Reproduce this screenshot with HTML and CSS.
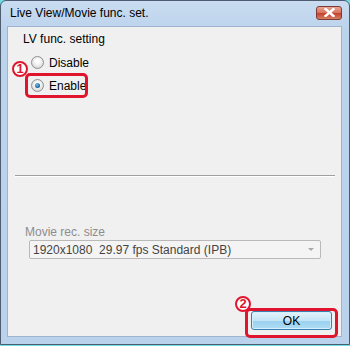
FILE: index.html
```html
<!DOCTYPE html>
<html>
<head>
<meta charset="utf-8">
<link rel="stylesheet" href="styles.css">
</head>
<body>
<div class="window">
  <div class="titlebar">
    <span class="title">Live View/Movie func. set.</span>
    <span class="close">
      <svg width="11" height="9" viewBox="0 0 11 9"><path d="M1.5 1 L9.5 8 M9.5 1 L1.5 8" stroke="#fff" stroke-width="2.4" stroke-linecap="square"/></svg>
    </span>
  </div>
  <div class="client">
    <div class="group-title">LV func. setting</div>
    <div class="radios">
      <div class="radio-row"><span class="radio"></span><span>Disable</span></div>
      <div class="radio-row"><span class="radio checked"></span><span>Enable</span></div>
    </div>
    <div class="separator"></div>
    <div class="field-label">Movie rec. size</div>
    <div class="select">
      <span>1920x1080&nbsp; 29.97 fps Standard (IPB)</span>
      <span class="arrow"></span>
    </div>
    <div class="footer">
      <button class="ok">OK</button>
    </div>
  </div>
  <div class="mark box1"></div>
  <div class="mark num n1">1</div>
  <div class="mark box2"></div>
  <div class="mark num n2">2</div>
</div>
</body>
</html>
```
FILE: styles.css
```css
html, body { margin: 0; padding: 0; }
body {
  width: 350px; height: 346px; overflow: hidden;
  background: #6fdfe6;
  font-family: "Liberation Sans", Arial, sans-serif;
  font-size: 12px; color: #000;
}
.window {
  position: relative;
  box-sizing: border-box;
  width: 350px; height: 345px;
  border: 1px solid #4d5c6e;
  border-radius: 6px 6px 0 0;
  background: linear-gradient(#c9dcf1, #bcd3ec 30px, #bad2ec);
  display: flex; flex-direction: column;
}
.titlebar {
  height: 25px;
  display: flex; align-items: center;
  padding: 0 7px 0 9px;
}
.title { flex: 1; font-size: 12px; margin-top: -1px; }
.close {
  width: 26px; height: 14px;
  box-sizing: border-box;
  border: 1px solid #7d3a36;
  border-radius: 3px;
  background: linear-gradient(#e9a593, #d7705c 50%, #c2402c 51%, #d67e63);
  display: flex; align-items: center; justify-content: center;
  margin-top: -2px;
}
.client {
  flex: 1;
  margin: 0 7px 7px 6px;
  border: 1px solid #9fb5cf;
  background: #f0f0f0;
  display: flex; flex-direction: column;
  padding: 0 0 0 0;
}
.group-title { margin: 5px 0 0 15px; line-height: 14px; }
.radios { margin: 5px 0 0 23px; }
.radio-row { height: 23px; display: flex; align-items: center; gap: 5px; }
.radio {
  width: 11px; height: 11px; border-radius: 50%;
  border: 1px solid #8e8f8f;
  background: radial-gradient(circle at 50% 40%, #ffffff 20%, #d6d6d6 80%);
  box-sizing: content-box;
  position: relative;
}
.radio.checked::after {
  content: ""; position: absolute;
  left: 3px; top: 3px; width: 5px; height: 5px; border-radius: 50%;
  background: radial-gradient(circle at 40% 35%, #6fc3f0, #0d4f86 80%);
}
.separator {
  margin: 78px 6px 0 7px;
  height: 1px; background: #a0a0a0;
  border-bottom: 1px solid #ffffff;
}
.field-label { margin: 48px 0 0 17px; color: #8d8d8d; line-height: 14px; }
.select {
  margin: 1px 0 0 21px;
  width: 292px; height: 19px;
  box-sizing: border-box;
  border: 1px solid #b9b9b9;
  border-radius: 2px;
  background: #f4f4f4;
  display: flex; align-items: center;
  padding: 0 6px 0 3px;
  color: #444;
}
.select span:first-child { flex: 1; }
.arrow {
  width: 0; height: 0;
  border-left: 3px solid transparent;
  border-right: 3px solid transparent;
  border-top: 3px solid #a8a8a8;
}
.footer { flex: 1; display: flex; justify-content: flex-end; align-items: flex-end; padding: 0 9px 6px 0; }
.ok {
  width: 81px; height: 19px;
  border: 1px solid #3c7fb1;
  border-radius: 3px;
  background: linear-gradient(#e5f4fc, #c4e5f6 50%, #98d1ef 51%, #b0dcf4);
  box-shadow: inset 0 0 0 1px #d5f0fd;
  font-family: "Liberation Sans", Arial, sans-serif;
  font-size: 12px; color: #000;
  padding: 0;
}
.mark { position: absolute; }
.box1 {
  left: 24px; top: 72px; width: 63px; height: 25px;
  border: 3px solid #e0152d; border-radius: 5px;
  box-sizing: border-box;
}
.box2 {
  left: 244px; top: 307px; width: 93px; height: 30px;
  border: 3px solid #e0152d; border-radius: 5px;
  box-sizing: border-box;
}
.num {
  width: 16px; height: 16px; border-radius: 50%;
  border: 2px solid #e0152d;
  background: #fff; color: #e0152d;
  box-sizing: border-box;
  font-size: 13px; font-weight: bold; line-height: 12px;
  text-align: center;
}
.n1 { left: 11px; top: 60px; }
.n2 { left: 234px; top: 295px; }
```
